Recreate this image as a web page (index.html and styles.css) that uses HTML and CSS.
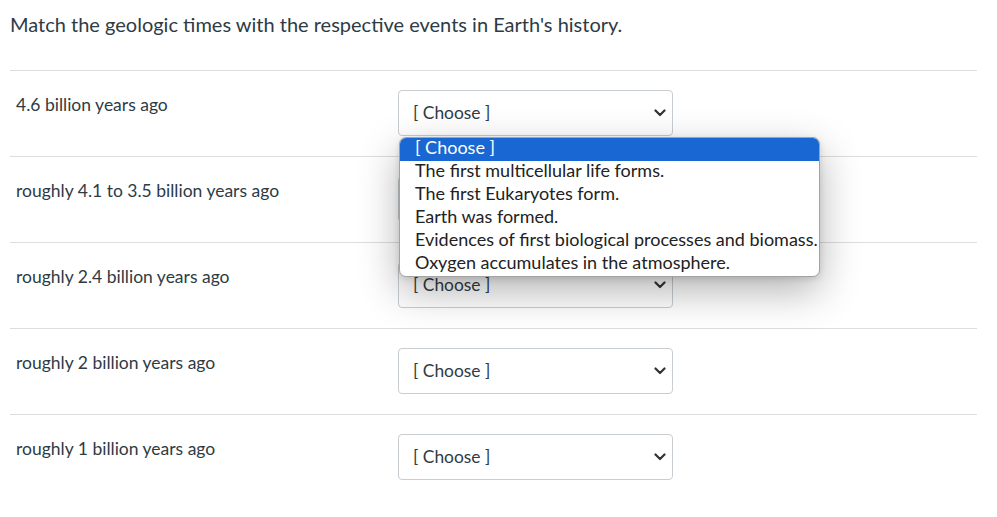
FILE: index.html
```html
<!DOCTYPE html>
<html lang="en">
<head>
  <meta charset="UTF-8">
  <meta name="viewport" content="width=device-width, initial-scale=1.0">
  <title>Matching question</title>
  <link rel="stylesheet" href="styles.css">
</head>
<body>
  <div class="quiz">
    <h1 class="question">Match the geologic times with the respective events in Earth's history.</h1>

    <div class="answers">
      <div class="answer">
        <div class="answer-label">4.6 billion years ago</div>
        <div class="select-wrap">
          <div class="select">
            <span>[ Choose ]</span>
            <svg class="caret" width="12" height="8" viewBox="0 0 12 8"><path d="M1.5 1.5 L6 6 L10.5 1.5" fill="none" stroke="#333" stroke-width="2.2" stroke-linecap="round" stroke-linejoin="round"/></svg>
          </div>
          <!-- open list of the first select -->
          <ul class="dropdown">
            <li class="selected">[ Choose ]</li>
            <li>The first multicellular life forms.</li>
            <li>The first Eukaryotes form.</li>
            <li>Earth was formed.</li>
            <li>Evidences of first biological processes and biomass.</li>
            <li>Oxygen accumulates in the atmosphere.</li>
          </ul>
        </div>
      </div>

      <div class="answer">
        <div class="answer-label">roughly 4.1 to 3.5 billion years ago</div>
        <div class="select-wrap">
          <div class="select">
            <span>[ Choose ]</span>
            <svg class="caret" width="12" height="8" viewBox="0 0 12 8"><path d="M1.5 1.5 L6 6 L10.5 1.5" fill="none" stroke="#333" stroke-width="2.2" stroke-linecap="round" stroke-linejoin="round"/></svg>
          </div>
        </div>
      </div>

      <div class="answer">
        <div class="answer-label">roughly 2.4 billion years ago</div>
        <div class="select-wrap">
          <div class="select">
            <span>[ Choose ]</span>
            <svg class="caret" width="12" height="8" viewBox="0 0 12 8"><path d="M1.5 1.5 L6 6 L10.5 1.5" fill="none" stroke="#333" stroke-width="2.2" stroke-linecap="round" stroke-linejoin="round"/></svg>
          </div>
        </div>
      </div>

      <div class="answer">
        <div class="answer-label">roughly 2 billion years ago</div>
        <div class="select-wrap">
          <div class="select">
            <span>[ Choose ]</span>
            <svg class="caret" width="12" height="8" viewBox="0 0 12 8"><path d="M1.5 1.5 L6 6 L10.5 1.5" fill="none" stroke="#333" stroke-width="2.2" stroke-linecap="round" stroke-linejoin="round"/></svg>
          </div>
        </div>
      </div>

      <div class="answer">
        <div class="answer-label">roughly 1 billion years ago</div>
        <div class="select-wrap">
          <div class="select">
            <span>[ Choose ]</span>
            <svg class="caret" width="12" height="8" viewBox="0 0 12 8"><path d="M1.5 1.5 L6 6 L10.5 1.5" fill="none" stroke="#333" stroke-width="2.2" stroke-linecap="round" stroke-linejoin="round"/></svg>
          </div>
        </div>
      </div>
    </div>
  </div>
</body>
</html>
```

FILE: styles.css
```css
body {
  margin: 0;
  background: #fff;
  font-family: Lato, "Open Sans", "Liberation Sans", sans-serif;
  color: #2d3b45;
}
.quiz {
  padding: 10px 20px 0 10px;
}
.question {
  margin: 0 0 32px;
  font-size: 20px;
  font-weight: 400;
  line-height: 28px;
}
.answer {
  display: flex;
  height: 86px;
  box-sizing: border-box;
  border-top: 1px solid #ddd;
}
.answer-label {
  width: 388px;
  box-sizing: border-box;
  padding: 23px 0 0 6px;
  font-size: 17.5px;
  line-height: 22px;
}
.select-wrap {
  position: relative;
  margin-top: 19px;
}
.select {
  width: 275px;
  height: 46px;
  box-sizing: border-box;
  display: flex;
  justify-content: space-between;
  align-items: center;
  padding: 0 6px 1px 14px;
  border: 1px solid #c7cdd1;
  border-radius: 4px;
  background: #fff;
  font-size: 17.4px;
  color: #2d3b45;
}
.caret {
  display: block;
}
.dropdown {
  position: absolute;
  top: 47px;
  left: 1px;
  z-index: 10;
  width: 421px;
  box-sizing: border-box;
  margin: 0;
  padding: 0;
  list-style: none;
  background: #fff;
  border: 1px solid #a3a3a3;
  border-radius: 7px;
  overflow: hidden;
  box-shadow: 0 14px 40px rgba(0, 0, 0, 0.3), 0 2px 6px rgba(0, 0, 0, 0.12);
}
.dropdown li {
  height: 23px;
  padding-left: 15px;
  font-size: 18px;
  line-height: 19px;
  color: #222;
  white-space: nowrap;
}
.dropdown li.selected {
  background: #1967d2;
  color: #fff;
}
```
